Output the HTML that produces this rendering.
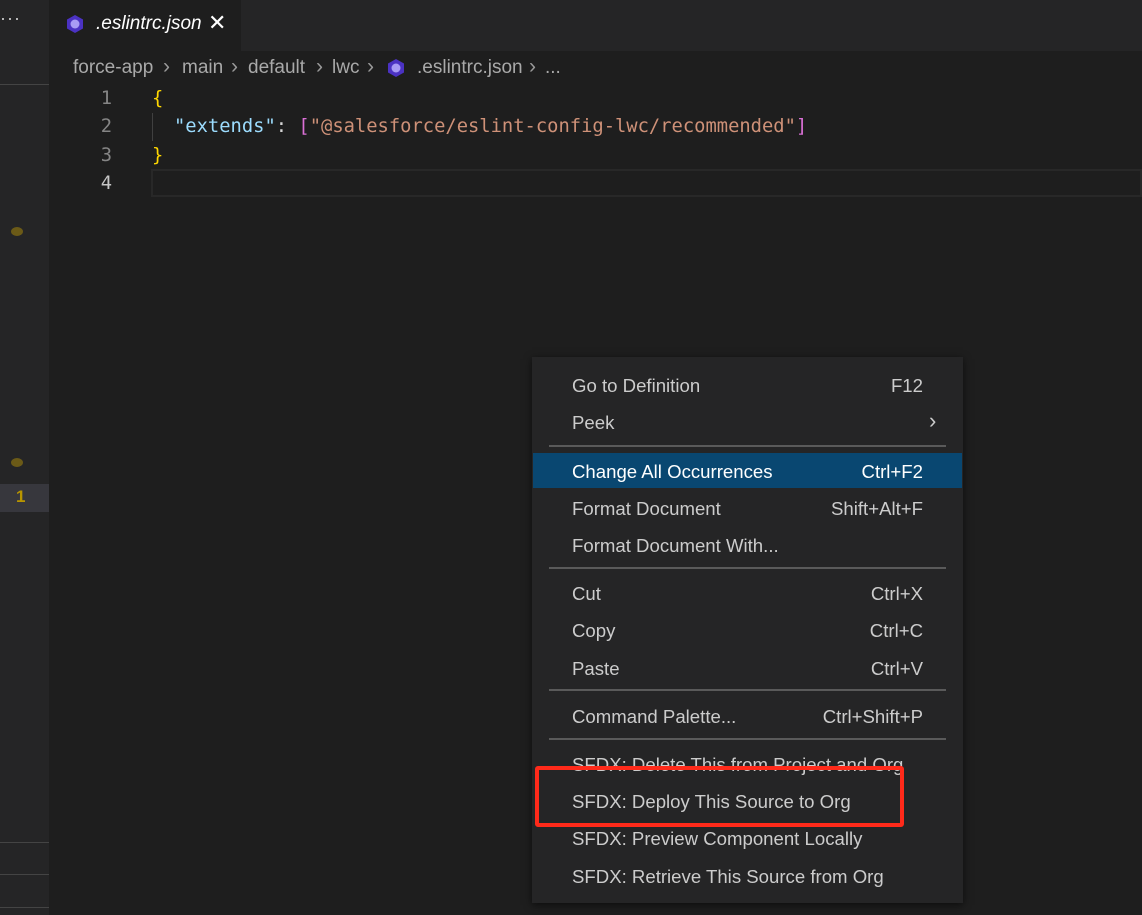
<!DOCTYPE html>
<html><head><meta charset="utf-8"><style>
*{margin:0;padding:0;box-sizing:border-box}
body{width:1142px;height:915px;background:#1e1e1e;position:relative;overflow:hidden;font-family:"Liberation Sans","DejaVu Sans",sans-serif;color:#ccc}
.a{position:absolute;white-space:nowrap}
.side{left:0;top:0;width:49px;height:915px;background:#252526}
.hl{height:1px;background:#444;left:0;width:49px}
.code{font-family:"DejaVu Sans Mono","Liberation Mono",monospace;font-size:18.8px}
.ln{width:40px;text-align:right;left:72px;color:#858585}
.mi{left:572px;font-size:18.6px;color:#ccc;line-height:22px;margin-top:1px}
.sc{right:219px;font-size:18.6px;color:#ccc;line-height:22px;margin-top:1px}
.sep{left:549px;width:397px;height:2px;background:#5a5a5a}
.bc{top:57px;font-size:19px;color:#a9a9a9}
.ch{top:55px;font-size:21px;color:#999}
</style></head><body>
<div class="a side"></div>
<div class="a" style="left:0;top:8px;color:#ccc;font-size:18px;letter-spacing:1px">···</div>
<div class="a hl" style="top:84px"></div>
<div class="a hl" style="top:842px"></div>
<div class="a hl" style="top:874px"></div>
<div class="a hl" style="top:907px"></div>
<div class="a" style="left:11px;top:227px;width:12px;height:9px;border-radius:50%;background:#6b5a17"></div>
<div class="a" style="left:11px;top:458px;width:12px;height:9px;border-radius:50%;background:#6b5a17"></div>
<div class="a" style="left:0;top:484px;width:49px;height:28px;background:#37373d"></div>
<div class="a" style="left:16px;top:487px;color:#b89500;font-size:17px;font-weight:bold">1</div>

<div class="a" style="left:49px;top:0;width:1093px;height:51px;background:#252526"></div>
<div class="a" style="left:49px;top:0;width:192px;height:51px;background:#1e1e1e"></div>
<svg class="a" style="left:64px;top:13px" width="22" height="22" viewBox="0 0 22 22"><polygon points="11,2 19,6.5 19,15.5 11,20 3,15.5 3,6.5" fill="#4b32c3"/><circle cx="11" cy="11" r="4.5" fill="#a89bf5"/></svg>
<div class="a" style="left:96px;top:13px;font-size:19px;font-style:italic;color:#fff">.eslintrc.json</div>
<div class="a" style="left:208px;top:10px;font-size:22px;color:#fff">✕</div>

<div class="a bc" style="left:73px">force-app</div>
<div class="a ch" style="left:163px">›</div>
<div class="a bc" style="left:182px">main</div>
<div class="a ch" style="left:231px">›</div>
<div class="a bc" style="left:248px">default</div>
<div class="a ch" style="left:316px">›</div>
<div class="a bc" style="left:332px">lwc</div>
<div class="a ch" style="left:367px">›</div>
<svg class="a" style="left:385px;top:57px" width="22" height="22" viewBox="0 0 22 22"><polygon points="11,2 19,6.5 19,15.5 11,20 3,15.5 3,6.5" fill="#4b32c3"/><circle cx="11" cy="11" r="4.5" fill="#a89bf5"/></svg>
<div class="a bc" style="left:417px">.eslintrc.json</div>
<div class="a ch" style="left:529px">›</div>
<div class="a bc" style="left:545px">...</div>

<div class="a code ln" style="top:88px">1</div>
<div class="a code ln" style="top:116px">2</div>
<div class="a code ln" style="top:145px">3</div>
<div class="a code ln" style="top:173px;color:#c6c6c6">4</div>
<div class="a" style="left:152px;top:113px;width:1px;height:28px;background:#404040"></div>
<div class="a" style="left:151px;top:169px;width:991px;height:28px;border:2px solid #282828"></div>
<div class="a code" style="left:152px;top:88px;color:#ffd700">{</div>
<div class="a code" style="left:174px;top:116px"><span style="color:#9cdcfe">"extends"</span><span style="color:#d4d4d4">: </span><span style="color:#da70d6">[</span><span style="color:#ce9178">"@salesforce/eslint-config-lwc/recommended"</span><span style="color:#da70d6">]</span></div>
<div class="a code" style="left:152px;top:145px;color:#ffd700">}</div>

<div class="a" style="left:532px;top:357px;width:431px;height:546px;background:#252526;box-shadow:0 2px 8px rgba(0,0,0,.6)"></div>
<div class="a" style="left:533px;top:453px;width:429px;height:35px;background:#094771"></div>
<div class="a sep" style="top:445px"></div>
<div class="a sep" style="top:567px"></div>
<div class="a sep" style="top:689px"></div>
<div class="a sep" style="top:738px"></div>

<div class="a mi" style="top:374px">Go to Definition</div><div class="a sc" style="top:374px">F12</div>
<div class="a mi" style="top:411px">Peek</div><div class="a" style="left:929px;top:408px;font-size:22px;color:#ccc">›</div>
<div class="a mi" style="top:460px;color:#fff">Change All Occurrences</div><div class="a sc" style="top:460px;color:#fff">Ctrl+F2</div>
<div class="a mi" style="top:497px">Format Document</div><div class="a sc" style="top:497px">Shift+Alt+F</div>
<div class="a mi" style="top:534px">Format Document With...</div>
<div class="a mi" style="top:582px">Cut</div><div class="a sc" style="top:582px">Ctrl+X</div>
<div class="a mi" style="top:619px">Copy</div><div class="a sc" style="top:619px">Ctrl+C</div>
<div class="a mi" style="top:657px">Paste</div><div class="a sc" style="top:657px">Ctrl+V</div>
<div class="a mi" style="top:705px">Command Palette...</div><div class="a sc" style="top:705px">Ctrl+Shift+P</div>
<div class="a mi" style="top:753px">SFDX: Delete This from Project and Org</div>
<div class="a mi" style="top:790px">SFDX: Deploy This Source to Org</div>
<div class="a mi" style="top:827px">SFDX: Preview Component Locally</div>
<div class="a mi" style="top:865px">SFDX: Retrieve This Source from Org</div>
<div class="a" style="left:535px;top:766px;width:369px;height:61px;border:4px solid #ff2a1a;border-radius:3px"></div>
</body></html>
